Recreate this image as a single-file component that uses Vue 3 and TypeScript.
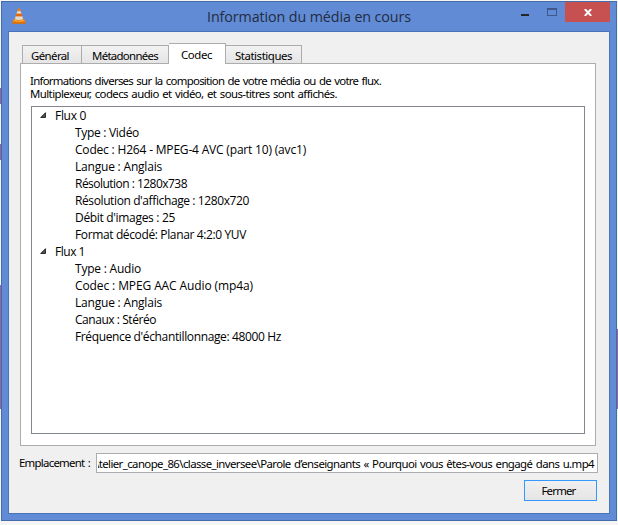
<script setup lang="ts">
interface Label { text: string; width: number }
interface Stream { title: Label; rows: Label[] }

// Spreads the glyphs of a label over its nominal width.
const vFit = {
  mounted(el: HTMLElement, binding: { value: number }) {
    const natural = el.getBoundingClientRect().width
    const count = (el.textContent ?? '').length
    el.style.letterSpacing = `${(binding.value - natural) / count}px`
  },
}

const tabs = [
  { text: 'Général', width: 38, name: 'general' },
  { text: 'Métadonnées', width: 66, name: 'metadata' },
  { text: 'Codec', width: 31, name: 'codec' },
  { text: 'Statistiques', width: 57, name: 'stats' },
]
const active = 'codec'

const intro: Label[] = [
  { text: 'Informations diverses sur la composition de votre média ou de votre flux.', width: 351 },
  { text: 'Multiplexeur, codecs audio et vidéo, et sous-titres sont affichés.', width: 307 },
]

const streams: Stream[] = [
  {
    title: { text: 'Flux 0', width: 31 },
    rows: [
      { text: 'Type : Vidéo', width: 64 },
      { text: 'Codec : H264 - MPEG-4 AVC (part 10) (avc1)', width: 231 },
      { text: 'Langue : Anglais', width: 87 },
      { text: 'Résolution : 1280x738', width: 112 },
      { text: "Résolution d'affichage : 1280x720", width: 174 },
      { text: "Débit d'images : 25", width: 100 },
      { text: 'Format décodé: Planar 4:2:0 YUV', width: 171 },
    ],
  },
  {
    title: { text: 'Flux 1', width: 30 },
    rows: [
      { text: 'Type : Audio', width: 66 },
      { text: 'Codec : MPEG AAC Audio (mp4a)', width: 178 },
      { text: 'Langue : Anglais', width: 87 },
      { text: 'Canaux : Stéréo', width: 81 },
      { text: "Fréquence d'échantillonnage: 48000 Hz", width: 206 },
    ],
  },
]

const location = 'Atelier_canope_86\\classe_inversee\\Parole d’enseignants « Pourquoi vous êtes-vous engagé dans u.mp4'
</script>

<template>
  <div class="desktop">
    <i class="patch p1"></i><i class="patch p2"></i><i class="patch p3"></i><i class="patch p4"></i>
    <section class="window">
      <header class="titlebar">
        <svg class="cone" width="14" height="16" viewBox="0 0 14 16">
          <path d="M1.6 11h10.8l1.4 4.2q0 .6-.8.6H1q-.8 0-.8-.6z" fill="#ef8212" />
          <path d="M.4 14.5h13.2v1H.4z" fill="#c96108" />
          <path d="M6 .6q1-.8 2 0l3.3 11.2q-4.3 2.7-8.6 0z" fill="#f07c18" />
          <path d="M5.3 3.2h3.4l.8 2.6H4.5zM3.7 8.3h6.6l.8 2.7q-4.1 1.8-8.2 0z" fill="#dddcd6" />
          <path d="M4.5 5.8h5l.8 2.5H3.7z" fill="#e4650b" />
          <path d="M2.7 11.5q4.3 2.5 8.6 0l.5 1.2q-4.7 2-9.6 0z" fill="#ffae3b" />
        </svg>
        <h1><span v-fit="204">Information du média en cours</span></h1>
        <div class="controls">
          <i class="minimize"></i>
          <i class="maximize"></i>
          <div class="close">
            <svg width="8" height="7" viewBox="0 0 8 7"><path d="M.8 0 7.2 7M7.2 0 .8 7" stroke="#fff" stroke-width="1.9" /></svg>
          </div>
        </div>
      </header>
      <main class="client">
        <nav class="tabs">
          <div v-for="t in tabs" :key="t.name" class="tab" :class="[t.name, { active: t.name === active }]">
            <span v-fit="t.width">{{ t.text }}</span>
          </div>
        </nav>
        <div class="pane">
          <div class="intro">
            <p v-for="line in intro" :key="line.text"><span v-fit="line.width">{{ line.text }}</span></p>
          </div>
          <div class="tree">
            <div v-for="s in streams" :key="s.title.text">
              <div class="node">
                <svg width="7" height="7" viewBox="0 0 7 7"><path d="M5.5 .7V5.5H.7z" fill="#505050" stroke="#2e2e2e" /></svg>
                <span v-fit="s.title.width">{{ s.title.text }}</span>
              </div>
              <div v-for="r in s.rows" :key="r.text" class="leaf"><span v-fit="r.width">{{ r.text }}</span></div>
            </div>
          </div>
        </div>
        <div class="location">
          <label><span v-fit="71">Emplacement :</span></label>
          <div class="field"><div class="clip"><span v-fit="502">{{ location }}</span></div></div>
        </div>
        <div class="actions"><button type="button"><span v-fit="34">Fermer</span></button></div>
      </main>
    </section>
  </div>
</template>

<style>
body { margin: 0; overflow: hidden; }
</style>

<style scoped>
* { box-sizing: border-box; }
.desktop {
  position: relative; width: 618px; height: 525px; padding: 1px; background: #f5f5f5;
  font: 11.4px/13px "Noto Sans", "Open Sans", sans-serif; word-spacing: 1px; color: #000;
}
span { display: block; width: max-content; white-space: pre; }
.patch { position: absolute; left: 0; width: 1px; background: #a0609f; }
.p1 { top: 88px; height: 16px; }
.p2 { top: 144px; height: 16px; }
.p3 { top: 285px; height: 124px; }
.p4 { left: 617px; top: 329px; height: 80px; }
.window {
  position: relative; width: 616px; height: 520px; padding: 0 6px 6px;
  border: 1px solid #426caa; background: #618bd4;
}
.titlebar { display: flex; height: 29px; word-spacing: 0; }
.cone { margin: 6px 0 0 4px; }
h1 {
  margin: 5px 0 0 181px; font: 400 14.3px/20px "Open Sans", "Noto Sans", sans-serif; color: #232c42;
}
.controls { display: flex; margin-left: auto; }
.minimize { width: 8px; height: 2px; margin: 12px 18px 0 0; background: #262626; }
.maximize { width: 10px; height: 8px; margin: 6px 8px 0 0; border: 1px solid #405887; border-top-width: 2px; }
.close { display: flex; align-items: center; justify-content: center; width: 45px; height: 20px; padding-top: 1px; background: #c75050; }
.client {
  width: 602px; height: 483px; padding: 11px 11px 0; border: 1px solid #4a74b8; background: #f0f0f0;
}
.tabs { position: relative; z-index: 1; display: flex; align-items: flex-end; height: 21px; padding-left: 2px; margin-bottom: -1px; }
.tab {
  display: flex; justify-content: center; height: 19px; padding-top: 3px;
  border: 1px solid #acacac; border-left-width: 0; background: linear-gradient(#f2f2f2, #e5e5e5);
}
.tab.general { width: 60px; border-left-width: 1px; padding-right: 4px; }
.tab.metadata { width: 87px; padding-right: 0; }
.tab.codec { width: 57px; padding-right: 1px; }
.tab.stats { width: 76px; }
.tab.active { height: 21px; padding-top: 4px; border-bottom: 0; background: #fff; }
.pane { width: 576px; height: 383px; padding: 10px 10px 0; border: 1px solid #acacac; background: #fff; }
.intro { height: 32px; margin-left: -1px; }
.intro p { height: 13px; margin: 0; }
.tree {
  width: 554px; height: 328px; border: 1px solid #828790; background: #fff;
  font: 12px/17px "Open Sans", "Noto Sans", sans-serif; word-spacing: 0;
}
.node { display: flex; align-items: center; height: 17px; padding-left: 8px; }
.node span { margin-left: 8px; }
.leaf { height: 17px; padding-left: 43px; }
.location { display: flex; height: 20px; margin: 7px 0 7px -1px; }
label { width: 77px; padding-top: 3px; }
.field { width: 502px; height: 20px; padding: 3px 1px 0; border: 1px solid #abadb3; background: #fff; }
.clip { display: flex; justify-content: flex-end; height: 16px; padding: 0 2px 0 0; overflow: hidden; }
.actions { display: flex; justify-content: flex-end; }
button {
  display: flex; justify-content: center; align-items: center;
  width: 73px; height: 21px; margin-right: 1px; padding: 0 4px 1px 0; border: 1px solid #3399ff;
  background: linear-gradient(#f0f0f0, #e5e5e5); font: inherit; color: inherit;
}
</style>
